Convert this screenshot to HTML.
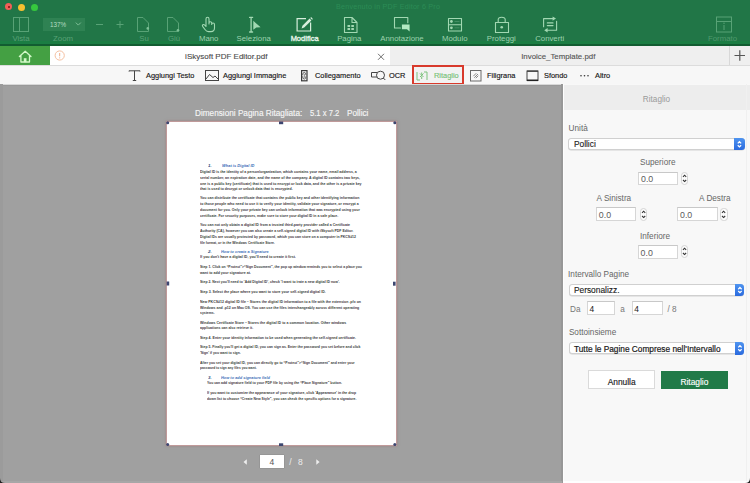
<!DOCTYPE html>
<html><head><meta charset="utf-8">
<style>
*{margin:0;padding:0;box-sizing:border-box}
html,body{width:750px;height:483px;overflow:hidden;background:#a0a0a0;font-family:"Liberation Sans",sans-serif}
.a{position:absolute}
#top{left:0;top:0;width:750px;height:41px;background:#217647}
#top2{left:0;top:41px;width:750px;height:3.2px;background:#1b7d43}
#top3{left:0;top:44.2px;width:750px;height:1.8px;background:#125c31}
.tl{position:absolute;width:7px;height:7px;border-radius:50%}
.lbl{position:absolute;font-size:8.5px;color:#96cfa8;white-space:nowrap;transform:translateX(-50%);top:33px;line-height:10px}

svg{position:absolute;overflow:visible}
#tabs{left:0;top:46px;width:750px;height:19px;background:#efefef}
#home{left:0;top:46px;width:50px;height:19.5px;background:#44a043}
#tab1{left:50px;top:46px;width:340px;height:19px;background:#fff}
#tabline{left:0;top:65px;width:750px;height:1px;background:#dcdcdc}
#tb{left:0;top:66px;width:750px;height:18px;background:#f7f7f7}
.tbt{position:absolute;top:69.99px;font-size:8px;line-height:11px;color:#161616;white-space:nowrap;-webkit-text-stroke:0.15px #161616;transform:scaleX(0.925);transform-origin:0 0}
#panel{left:563px;top:84px;width:187px;height:399px;background:#f8f8f8}
#phead{left:563.5px;top:85px;width:186.5px;height:24.5px;background:#ededed}
.pl{position:absolute;font-size:8.5px;line-height:10px;color:#555;white-space:nowrap}
.inp{position:absolute;background:#fff;border:1px solid #d6d6d6;border-top-color:#c8c8c8}
.it{position:absolute;font-size:8.5px;line-height:10px;color:#333;white-space:nowrap}
.sel{position:absolute;background:#fff;border:1px solid #d0d0d0;border-radius:3px;box-shadow:0 0.5px 0.5px rgba(0,0,0,.15)}
.selb{position:absolute;background:linear-gradient(#4f94f0,#2a6ade);border-radius:0 3.5px 3.5px 0}
.stp{position:absolute;background:#fcfcfc;border:1px solid #d4d4d4;border-radius:3.5px}
#page{left:166px;top:121px;width:231px;height:325px;background:#fff;border:1.5px solid #c09a9a;box-shadow:0 0 2.5px rgba(150,100,100,.55)}
.h{position:absolute;background:#3a4a7a}
.dl{position:absolute;white-space:nowrap;color:#3c3c3c;font-size:4.5px;line-height:5.85px;transform-origin:0 0;font-weight:bold;}
.hd{color:#3f70b8;font-style:italic;font-weight:bold}
</style></head><body>
<div class="a" id="top"></div>
<div class="a" id="top2"></div>
<div class="a" id="top3"></div>
<div class="tl" style="left:5.4px;top:3.3px;background:#f25f58"></div><div class="a" style="left:7.6px;top:5.5px;width:2.6px;height:2.6px;border-radius:50%;background:#7a0f0f"></div>
<div class="tl" style="left:18px;top:3.5px;background:#f8c030"></div>
<div class="tl" style="left:31px;top:3.5px;background:#36c83e"></div>
<div class="a" style="left:336px;top:1.5px;font-size:7.2px;line-height:10px;letter-spacing:0.2px;color:#2c8c56;white-space:nowrap">Benvenuto in PDF Editor 6 Pro</div>


<svg class="a" style="left:0;top:0" width="750" height="46" viewBox="0 0 750 46">
<g fill="none" stroke="#58a276" stroke-width="1">
 <!-- Vista -->
 <rect x="13.5" y="17.5" width="15" height="14"/>
 <line x1="19.5" y1="17.5" x2="19.5" y2="31.5"/>
 <!-- minus plus -->
 <line x1="96" y1="24.5" x2="103" y2="24.5"/>
 <line x1="116.5" y1="24.5" x2="123.5" y2="24.5"/>
 <line x1="120" y1="21" x2="120" y2="28"/>
 <!-- Su -->
 <path d="M137.5 17.5 H143 L148.5 23 V31.5 H137.5 Z"/>
 <!-- Giu -->
 <path d="M167.5 17.5 H173 L178.5 23 V31.5 H167.5 Z"/>
 <!-- Formato -->
 <rect x="716.5" y="17" width="15" height="15"/>
 <line x1="716.5" y1="21.5" x2="731.5" y2="21.5"/>
 <line x1="724" y1="25" x2="724" y2="30"/>
</g>
<g fill="#58a276">
 <circle cx="147.8" cy="28.4" r="1.3" fill="#7cc096"/>
 <circle cx="178" cy="30.3" r="1.3" fill="#7cc096"/>
 <circle cx="724" cy="23.3" r="0.7"/>
</g>
<rect x="43" y="18" width="42" height="13" fill="#2f8253"/>
<text x="50" y="27.1" font-family="Liberation Sans" font-size="6.3" fill="#b4dcc2">137%</text>
<path d="M75.8 22.6 L78.3 25.1 L80.8 22.6" fill="none" stroke="#7fbf97" stroke-width="1"/>
<g fill="none" stroke="#a2d8b2" stroke-width="1.1" stroke-linejoin="round" stroke-linecap="round">
 <!-- Mano -->
 <path d="M206 26 V19 Q206 17.3 207.5 17.3 Q209 17.3 209 19 V24 M209 23 Q209 21.8 210.4 21.8 Q211.7 21.8 211.7 23 V24.5 M211.7 24 Q211.7 23 213 23 Q214.5 23 214.5 24.5 V28 Q214.5 31.6 211 31.6 H208.5 Q206.5 31.6 205 29.5 L202.6 26.3 Q202 25 203.2 24.6 Q204.3 24.3 206 26.5"/>
 <!-- Seleziona -->
 <path d="M249.6 17.4 H252.6 M251.1 17.4 V32 M249.6 32 H252.6" stroke-width="1.3"/>
 <!-- Pagina -->
 <path d="M344.5 17.5 H352 L357 22.5 V32.5 H344.5 Z M352 17.5 V22.5 H357"/>
 <!-- Annotazione -->
 <path d="M400.5 28 H394.5 V17.5 H407.8 V22.8"/>
 <!-- Modulo -->
 <rect x="448.5" y="18.5" width="13" height="12.5"/>
 <line x1="448.5" y1="24.7" x2="461.5" y2="24.7"/>
 <!-- Proteggi -->
 <rect x="495.5" y="22.5" width="13" height="10"/>
 <path d="M498.2 22.3 V19.6 Q498.2 17.2 501.7 17.2 Q505.2 17.2 505.2 19.6 V22.3"/>
 <!-- Converti -->
 <path d="M543.6 26.8 V18.6 H553"/>
 <path d="M556.6 21.2 V30.2 H547"/>
 <line x1="547.3" y1="22.9" x2="553" y2="22.9"/>
 <line x1="547.3" y1="25.6" x2="553" y2="25.6"/>
</g>
<g fill="#a2d8b2">
 <path d="M253.3 20.8 L260.6 27.2 L256.3 27.5 L253.3 29.8 Z"/>
 <path d="M401.9 24.4 H409.6 V31.6 L407 29.2 H401.9 Z" fill="#b2eac2"/>
 <circle cx="451.4" cy="21.5" r="1.4"/><circle cx="451.4" cy="27.8" r="1.4"/>
 <rect x="454.5" y="21" width="5" height="1" opacity=".25"/><rect x="454.5" y="27.3" width="5" height="1" opacity=".25"/>
 <circle cx="501.7" cy="27.3" r="1.3"/><path d="M552.6 16.4 L556 18.6 L552.6 20.8 Z M547.6 28 L544.2 30.2 L547.6 32.4 Z"/>
 <rect x="347.5" y="25" width="2.6" height="2"/><rect x="351.3" y="25" width="2.6" height="2"/>
 <rect x="347.5" y="28" width="2.6" height="2"/><rect x="351.3" y="28" width="2.6" height="2"/>
</g>
<g fill="none" stroke="#d6eedc" stroke-width="1.2">
 <path d="M306 18.6 H297.1 V31 H310.6 V22.5"/>
</g>
<g fill="#d6eedc"><path d="M301.6 28.6 L302.4 25.8 L309.6 18.6 L311.4 20.4 L304.2 27.6 Z M310.3 17.9 L311.1 17.1 L312.9 18.9 L312.1 19.7 Z"/></g>
<g font-family="Liberation Sans" font-size="7.8" text-anchor="middle">
 <text x="21" y="41.2" fill="#58a276">Vista</text>
 <text x="63" y="41.2" fill="#58a276">Zoom</text>
 <text x="144" y="41.2" fill="#58a276">Su</text>
 <text x="174" y="41.2" fill="#58a276">Giù</text>
 <text x="208.7" y="41.2" fill="#9cd2ad">Mano</text>
 <text x="253.7" y="41.2" fill="#9cd2ad">Seleziona</text>
 <text x="304.6" y="41.2" fill="#e4f3e8" font-size="7.5" stroke="#e4f3e8" stroke-width="0.35">Modifica</text>
 <text x="349.3" y="41.2" fill="#9cd2ad">Pagina</text>
 <text x="402" y="41.2" fill="#9cd2ad">Annotazione</text>
 <text x="454.7" y="41.2" fill="#9cd2ad">Modulo</text>
 <text x="501.3" y="41.2" fill="#9cd2ad">Proteggi</text>
 <text x="549.7" y="41.2" fill="#9cd2ad">Converti</text>
 <text x="722.5" y="41.2" fill="#4f9a6d">Formato</text>
</g>
</svg>

<div class="a" id="tabs"></div>
<div class="a" id="home"></div>
<div class="a" id="tab1"></div>
<div class="a" id="tabline"></div>
<div class="a" id="tb"></div>

<div class="a" style="left:729px;top:46px;width:1px;height:19px;background:#d8d8d8"></div>
<svg class="a" style="left:0;top:46px" width="750" height="20" viewBox="0 46 750 20">
 <path d="M19.4 56.6 L25.2 51.2 L31 56.6 M20.9 55.4 V62 H29.5 V55.4" fill="none" stroke="#d2f8c8" stroke-width="1.3" stroke-linejoin="round" stroke-linecap="round"/><rect x="23.8" y="58.2" width="2.7" height="3.9" fill="#d2f8c8"/>
 <circle cx="59.7" cy="55.5" r="4.6" fill="none" stroke="#f5c0a0" stroke-width="1"/>
 <line x1="59.7" y1="53" x2="59.7" y2="56.3" stroke="#f2ad88" stroke-width="1"/>
 <circle cx="59.7" cy="57.8" r="0.6" fill="#f2ad88"/>
 <path d="M378 53.8 L384 59.8 M384 53.8 L378 59.8" stroke="#707070" stroke-width="1"/>
 <path d="M734.5 55.5 H745 M739.8 50.2 V60.8" stroke="#555" stroke-width="1.2"/>
</svg>
<div class="a" style="left:50px;top:47.3px;width:340px;height:19px;font-size:8px;line-height:19px;text-align:center;color:#4a4a4a;padding-left:12.5px;-webkit-text-stroke:0.12px #4a4a4a">iSkysoft PDF Editor.pdf</div>
<div class="a" style="left:390px;top:47.3px;width:339px;height:19px;font-size:7.85px;line-height:19px;text-align:center;color:#555;padding-right:2.5px;-webkit-text-stroke:0.12px #555">Invoice_Template.pdf</div>

<div class="a" style="left:412px;top:64.5px;width:51.5px;height:20.5px;border:2px solid #d83a2c;background:#f2f2f2"></div>
<svg class="a" style="left:0;top:66px" width="750" height="18" viewBox="0 66 750 18">
 <g fill="none" stroke="#444" stroke-width="1">
  <path d="M129 71.5 V70.8 H140 V71.5 M134.5 70.8 V80.5 M132.8 80.5 H136.2"/>
  <rect x="205.5" y="70.5" width="13" height="10"/>
  <path d="M206 79 L209.5 74.5 L213 77.5 L215 76 L218 79"/>
  <rect x="301.6" y="70.6" width="5.4" height="10.2" stroke="#3a3a3a" stroke-width="1.2"/>
  <path d="M302.6 75.2 Q302.6 72.4 304.3 72.4 Q306 72.4 306 75.2 M302.6 76.3 Q302.6 79.1 304.3 79.1 Q306 79.1 306 76.3" stroke="#555" stroke-width="0.9"/>
  <line x1="304.3" y1="73.8" x2="304.3" y2="77.8" stroke="#888" stroke-width="1"/>
  <path d="M377 72.5 H371.5 V77 H377"/>
  <circle cx="380.5" cy="75.2" r="4"/>
  <line x1="383.3" y1="78" x2="385.3" y2="80"/>
  <rect x="470.5" y="70.5" width="10.5" height="10.5" stroke="#6a6a6a"/>
  <path d="M473.3 76.2 L476.3 73.2 M474.3 77.7 L478 74 M475.8 78.2 L478.3 75.7" stroke="#777" stroke-width="0.9"/>
  <rect x="527" y="71" width="11" height="9.5"/><line x1="527" y1="71.2" x2="538" y2="71.2" stroke-width="1.4"/>
 </g>
 <line x1="527" y1="80.3" x2="538" y2="80.3" stroke="#222" stroke-width="1.6"/>
 <g fill="#333"><circle cx="581" cy="75.8" r="0.8"/><circle cx="584.5" cy="75.8" r="0.8"/><circle cx="588" cy="75.8" r="0.8"/></g>
 <g fill="none" stroke="#7cc27c" stroke-width="1">
  <path d="M417 72 V80 H420 M427 80 V72 H424"/>
  <path d="M420 73.5 L423.5 77 M423.5 73.5 L420 77 M421.7 72.5 V74.5 M421.7 76.5 V79"/>
 </g>
</svg>
<div class="tbt" style="left:146px">Aggiungi Testo</div>
<div class="tbt" style="left:222.7px">Aggiungi Immagine</div>
<div class="tbt" style="left:314.8px">Collegamento</div>
<div class="tbt" style="left:388.9px">OCR</div>
<div class="tbt" style="left:433.5px;color:#72c072;-webkit-text-stroke:0.12px #72c072">Ritaglio</div>
<div class="tbt" style="left:486.6px">Filigrana</div>
<div class="tbt" style="left:543.5px">Sfondo</div>
<div class="tbt" style="left:595px">Altro</div>


<div class="a" style="left:0;top:83.5px;width:561px;height:1px;background:#d8d8d8"></div>
<div class="a" style="left:0;top:84.5px;width:561px;height:1.5px;background:#999"></div>
<div class="a" style="left:0;top:84px;width:2.5px;height:397px;background:#9b9b9b"></div>
<div class="a" id="panel"></div>
<div class="a" id="phead"></div>
<div class="a" style="left:561px;top:84px;width:1.5px;height:399px;background:#979797"></div>
<div class="a" style="left:562.5px;top:84px;width:1px;height:399px;background:#fdfdfd"></div>
<div class="a" style="left:0;top:481px;width:562px;height:2px;background:#a7a7a7"></div>
<div class="a" style="left:563px;top:481px;width:187px;height:2px;background:#fefefe"></div>
<div class="a" style="left:745.5px;top:84px;width:1px;height:397px;background:#f0f0f0"></div>
<svg class="a" style="left:0;top:478px" width="6" height="5" viewBox="0 0 6 5"><path d="M0 0 V5 H5 Q0 5 0 0 Z" fill="#222"/></svg>
<svg class="a" style="left:744px;top:478px" width="6" height="5" viewBox="0 0 6 5"><path d="M6 0 V5 H1 Q6 5 6 0 Z" fill="#222"/></svg>


<div class="a" id="page"></div>
<!--DOC-->
<div class="dl hd" style="left:221.5px;top:163.25px;transform:scale(0.884,0.92)">What is Digital ID</div>
<div class="dl" style="left:200.0px;top:168.95px;transform:scale(0.785,0.92)">Digital ID is the identity of a person/organization, which contains your name, email address, a</div>
<div class="dl" style="left:200.0px;top:174.85px;transform:scale(0.789,0.92)">serial number, an expiration date, and the name of the company. A digital ID contains two keys,</div>
<div class="dl" style="left:200.0px;top:180.55px;transform:scale(0.785,0.92)">one is a public key (certificate) that is used to encrypt or lock data, and the other is a private key</div>
<div class="dl" style="left:200.0px;top:186.45px;transform:scale(0.782,0.92)">that is used to decrypt or unlock data that is encrypted.</div>
<div class="dl" style="left:200.0px;top:195.25px;transform:scale(0.790,0.92)">You can distribute the certificate that contains the public key and other identifying information</div>
<div class="dl" style="left:200.0px;top:201.05px;transform:scale(0.792,0.92)">to those people who need to use it to verify your identity, validate your signature, or encrypt a</div>
<div class="dl" style="left:200.0px;top:206.85px;transform:scale(0.786,0.92)">document for you. Only your private key can unlock information that was encrypted using your</div>
<div class="dl" style="left:200.0px;top:212.85px;transform:scale(0.776,0.92)">certificate. For security purposes, make sure to store your digital ID in a safe place.</div>
<div class="dl" style="left:200.0px;top:222.45px;transform:scale(0.789,0.92)">You can not only obtain a digital ID from a trusted third-party provider called a Certificate</div>
<div class="dl" style="left:200.0px;top:228.05px;transform:scale(0.774,0.92)">Authority (CA), however you can also create a self-signed digital ID with iSkysoft PDF Editor.</div>
<div class="dl" style="left:200.0px;top:233.85px;transform:scale(0.773,0.92)">Digital IDs are usually protected by password, which you can store on a computer in PKCS#12</div>
<div class="dl" style="left:200.0px;top:239.75px;transform:scale(0.746,0.92)">file format, or in the Windows Certificate Store.</div>
<div class="dl hd" style="left:221.0px;top:248.55px;transform:scale(0.863,0.92)">How to create a Signature</div>
<div class="dl" style="left:200.0px;top:254.45px;transform:scale(0.796,0.92)">If you don't have a digital ID, you'll need to create it first.</div>
<div class="dl" style="left:200.0px;top:264.05px;transform:scale(0.766,0.92)">Step 1. Click on “Protect”&gt;“Sign Document”, the pop up window reminds you to select a place you</div>
<div class="dl" style="left:200.0px;top:269.85px;transform:scale(0.794,0.92)">want to add your signature at.</div>
<div class="dl" style="left:200.0px;top:279.25px;transform:scale(0.768,0.92)">Step 2. Next you'll need to 'Add Digital ID', check 'I want to irate a new digital ID now'.</div>
<div class="dl" style="left:200.0px;top:288.55px;transform:scale(0.784,0.92)">Step 3. Select the place where you want to store your self-signed digital ID.</div>
<div class="dl" style="left:200.0px;top:298.65px;transform:scale(0.784,0.92)">New PKCS#12 digital ID file – Stores the digital ID information to a file with the extension .pfx on</div>
<div class="dl" style="left:200.0px;top:304.55px;transform:scale(0.784,0.92)">Windows and .p12 on Mac OS. You can use the files interchangeably across different operating</div>
<div class="dl" style="left:200.0px;top:310.25px;transform:scale(0.763,0.92)">systems.</div>
<div class="dl" style="left:200.0px;top:319.75px;transform:scale(0.788,0.92)">Windows Certificate Store – Stores the digital ID to a common location. Other windows</div>
<div class="dl" style="left:200.0px;top:325.45px;transform:scale(0.778,0.92)">applications can also retrieve it.</div>
<div class="dl" style="left:200.0px;top:335.25px;transform:scale(0.783,0.92)">Step 4. Enter your identity information to be used when generating the self-signed certificate.</div>
<div class="dl" style="left:200.0px;top:344.05px;transform:scale(0.771,0.92)">Step 5. Finally you'll get a digital ID, you can sign as. Enter the password you set before and click</div>
<div class="dl" style="left:200.0px;top:349.95px;transform:scale(0.755,0.92)">'Sign' if you want to sign.</div>
<div class="dl" style="left:200.0px;top:359.55px;transform:scale(0.767,0.92)">After you set your digital ID, you can directly go to “Protect”&gt;“Sign Document” and enter your</div>
<div class="dl" style="left:200.0px;top:365.45px;transform:scale(0.724,0.92)">password to sign any files you want.</div>
<div class="dl hd" style="left:221.0px;top:375.05px;transform:scale(0.871,0.92)">How to add signature field</div>
<div class="dl" style="left:207.3px;top:380.35px;transform:scale(0.764,0.92)">You can add signature field to your PDF file by using the “Place Signature” button.</div>
<div class="dl" style="left:207.3px;top:390.25px;transform:scale(0.782,0.92)">If you want to customize the appearance of your signature, click 'Appearance' in the drop</div>
<div class="dl" style="left:207.3px;top:396.05px;transform:scale(0.766,0.92)">down list to choose “Create New Style”, you can check the specific options for a signature.</div>
<div class="dl hd" style="left:208px;color:#34507e;top:163.25px;transform:scaleY(0.92)">1.</div>
<div class="dl hd" style="left:208px;color:#34507e;top:248.55px;transform:scaleY(0.92)">2.</div>
<div class="dl hd" style="left:208px;color:#34507e;top:375.05px;transform:scaleY(0.92)">3.</div>
<!--/DOC-->

<svg class="a" style="left:160px;top:115px" width="245" height="340" viewBox="160 115 245 340">
 <g fill="#3c4670">
  <circle cx="167.7" cy="122.8" r="1.5"/><circle cx="394.8" cy="122.8" r="1.5"/>
  <circle cx="167.7" cy="444.4" r="1.5"/><circle cx="394.8" cy="444.4" r="1.5"/>
  <rect x="279" y="121.5" width="4.2" height="2.7"/>
  <rect x="279" y="443.3" width="4.2" height="2.7"/>
  <rect x="166.6" y="281.5" width="2.6" height="4"/>
  <rect x="393" y="281.7" width="2.6" height="4"/>
 </g>
</svg>


<div class="a" style="left:563px;top:94.56px;width:187px;height:10px;font-size:8.2px;line-height:10px;text-align:center;color:#9a9a9a">Ritaglio</div>
<div class="pl" style="left:568.6px;top:124.06px;font-size:8.2px;color:#666">Unità</div>
<div class="sel" style="left:568px;top:138px;width:177px;height:12px"></div>
<div class="selb" style="left:734.3px;top:137.8px;width:10.9px;height:12.6px"></div><svg class="a" style="left:734.3px;top:137.8px" width="10.9" height="12.6" viewBox="0 0 10.9 12.6"><path d="M3.75 5.40 L5.45 3.70 L7.15 5.40 M3.75 7.20 L5.45 8.90 L7.15 7.20" fill="none" stroke="#fff" stroke-width="1.25"/></svg>
<div class="pl" style="left:573.9px;top:138.89px;font-size:8.4px;color:#1a1a1a;-webkit-text-stroke:0.12px #1a1a1a">Pollici</div>
<div class="pl" style="left:640px;top:158.46px;font-size:8.2px;color:#666">Superiore</div>
<div class="inp" style="left:638.2px;top:171.6px;width:40px;height:13.6px"></div>
<div class="pl" style="left:641px;top:174.35px;font-size:8.8px;color:#5c5c5c">0.0</div>
<div class="stp" style="left:681px;top:172px;width:7.2px;height:12.8px"></div><svg class="a" style="left:681px;top:172px" width="7.2" height="12.8" viewBox="0 0 7.2 12.8"><path d="M2.00 4.80 L3.60 3.20 L5.20 4.80 M2.00 8.00 L3.60 9.60 L5.20 8.00" fill="none" stroke="#333" stroke-width="1.1"/></svg>
<div class="pl" style="left:596.6px;top:194.26px;font-size:8.2px;color:#666">A Sinistra</div>
<div class="pl" style="left:699.1px;top:194.26px;font-size:8.2px;color:#666">A Destra</div>
<div class="inp" style="left:596.2px;top:207.4px;width:40.2px;height:13.4px"></div>
<div class="pl" style="left:598.8px;top:210.15px;font-size:8.8px;color:#5c5c5c">0.0</div>
<div class="stp" style="left:640px;top:207.8px;width:7.3px;height:12.8px"></div><svg class="a" style="left:640px;top:207.8px" width="7.3" height="12.8" viewBox="0 0 7.3 12.8"><path d="M2.05 4.80 L3.65 3.20 L5.25 4.80 M2.05 8.00 L3.65 9.60 L5.25 8.00" fill="none" stroke="#333" stroke-width="1.1"/></svg>
<div class="inp" style="left:677.4px;top:207.4px;width:40.4px;height:13.4px"></div>
<div class="pl" style="left:680px;top:210.15px;font-size:8.8px;color:#5c5c5c">0.0</div>
<div class="stp" style="left:720.4px;top:207.8px;width:7.2px;height:12.8px"></div><svg class="a" style="left:720.4px;top:207.8px" width="7.2" height="12.8" viewBox="0 0 7.2 12.8"><path d="M2.00 4.80 L3.60 3.20 L5.20 4.80 M2.00 8.00 L3.60 9.60 L5.20 8.00" fill="none" stroke="#333" stroke-width="1.1"/></svg>
<div class="pl" style="left:640px;top:232.26px;font-size:8.2px;color:#666">Inferiore</div>
<div class="inp" style="left:638px;top:245px;width:40.3px;height:13.5px"></div>
<div class="pl" style="left:640.6px;top:247.75px;font-size:8.8px;color:#5c5c5c">0.0</div>
<div class="stp" style="left:681px;top:245.4px;width:7.1px;height:12.8px"></div><svg class="a" style="left:681px;top:245.4px" width="7.1" height="12.8" viewBox="0 0 7.1 12.8"><path d="M1.95 4.80 L3.55 3.20 L5.15 4.80 M1.95 8.00 L3.55 9.60 L5.15 8.00" fill="none" stroke="#333" stroke-width="1.1"/></svg>
<div class="pl" style="left:568.1px;top:270.26px;font-size:8.2px;color:#666">Intervallo Pagine</div>
<div class="sel" style="left:568.9px;top:284.3px;width:175.5px;height:11.8px"></div>
<div class="selb" style="left:734.6px;top:284.1px;width:9.9px;height:12.2px"></div><svg class="a" style="left:734.6px;top:284.1px" width="9.9" height="12.2" viewBox="0 0 9.9 12.2"><path d="M3.25 5.20 L4.95 3.50 L6.65 5.20 M3.25 7.00 L4.95 8.70 L6.65 7.00" fill="none" stroke="#fff" stroke-width="1.25"/></svg>
<div class="pl" style="left:573.9px;top:285.19px;font-size:8.4px;color:#1a1a1a;-webkit-text-stroke:0.12px #1a1a1a">Personalizz.</div>
<div class="pl" style="left:570.1px;top:304.86px;font-size:8.2px;color:#777">Da</div>
<div class="inp" style="left:587.4px;top:301.4px;width:27.2px;height:13.6px"></div>
<div class="pl" style="left:589.5px;top:303.89px;font-size:8.4px;color:#1a1a1a">4</div>
<div class="pl" style="left:620.2px;top:304.86px;font-size:8.2px;color:#777">a</div>
<div class="inp" style="left:631.9px;top:301.4px;width:30.7px;height:13.6px"></div>
<div class="pl" style="left:634.2px;top:303.89px;font-size:8.4px;color:#1a1a1a">4</div>
<div class="pl" style="left:667.4px;top:304.86px;font-size:8.2px;color:#777">/ 8</div>
<div class="pl" style="left:568.9px;top:327.86px;font-size:8.2px;color:#666">Sottoinsieme</div>
<div class="sel" style="left:568.9px;top:342.3px;width:175.5px;height:12.2px"></div>
<div class="selb" style="left:734.6px;top:342.1px;width:9.9px;height:12.6px"></div><svg class="a" style="left:734.6px;top:342.1px" width="9.9" height="12.6" viewBox="0 0 9.9 12.6"><path d="M3.25 5.40 L4.95 3.70 L6.65 5.40 M3.25 7.20 L4.95 8.90 L6.65 7.20" fill="none" stroke="#fff" stroke-width="1.25"/></svg>
<div class="pl" style="left:574px;top:343.72px;font-size:8.3px;color:#1a1a1a;-webkit-text-stroke:0.2px #1a1a1a">Tutte le Pagine Comprese nell'Intervallo</div>
<div class="a" style="left:588.2px;top:370.1px;width:67px;height:19.2px;background:#fff;border:1px solid #dadada"></div>
<div class="a" style="left:660.6px;top:370.6px;width:67px;height:18.6px;background:#217a48"></div>
<div class="a" style="left:588.2px;top:377px;width:67px;font-size:8.4px;line-height:10px;text-align:center;color:#1a1a1a;-webkit-text-stroke:0.15px #1a1a1a">Annulla</div>
<div class="a" style="left:660.6px;top:377px;width:67px;font-size:8.4px;line-height:10px;text-align:center;color:#fff;padding-left:0.6px;-webkit-text-stroke:0.12px #fff">Ritaglio</div>

<div class="a" style="left:194.9px;top:107.6px;font-size:8.9px;line-height:10px;color:#f6f6f6;white-space:nowrap;-webkit-text-stroke:0.15px #f6f6f6;transform:scaleX(0.925);transform-origin:0 0">Dimensioni Pagina Ritagliata:</div>
<div class="a" style="left:310.4px;top:107.6px;font-size:8.9px;line-height:10px;color:#f6f6f6;white-space:nowrap;-webkit-text-stroke:0.15px #f6f6f6;transform:scaleX(0.86);transform-origin:0 0">5.1 x 7.2</div>
<div class="a" style="left:346.6px;top:107.6px;font-size:8.9px;line-height:10px;color:#f6f6f6;white-space:nowrap;-webkit-text-stroke:0.15px #f6f6f6;transform:scaleX(0.925);transform-origin:0 0">Pollici</div>
<svg class="a" style="left:230px;top:450px" width="100" height="25" viewBox="230 450 100 25">
 <path d="M246.8 459.3 L243.5 462 L246.8 464.7 Z" fill="#eee"/>
 <path d="M316.3 459.3 L319.6 462 L316.3 464.7 Z" fill="#eee"/>
</svg>
<div class="a" style="left:259.6px;top:455px;width:24.4px;height:12.7px;background:#fff;box-shadow:0 0 1px rgba(0,0,0,.35);font-size:8.5px;line-height:14px;text-align:center;color:#555">4</div>
<div class="a" style="left:289.3px;top:457.3px;font-size:8.5px;line-height:10px;color:#eee;white-space:nowrap">/</div><div class="a" style="left:297.9px;top:457.3px;font-size:8.5px;line-height:10px;color:#eee;white-space:nowrap">8</div>

</body></html>
